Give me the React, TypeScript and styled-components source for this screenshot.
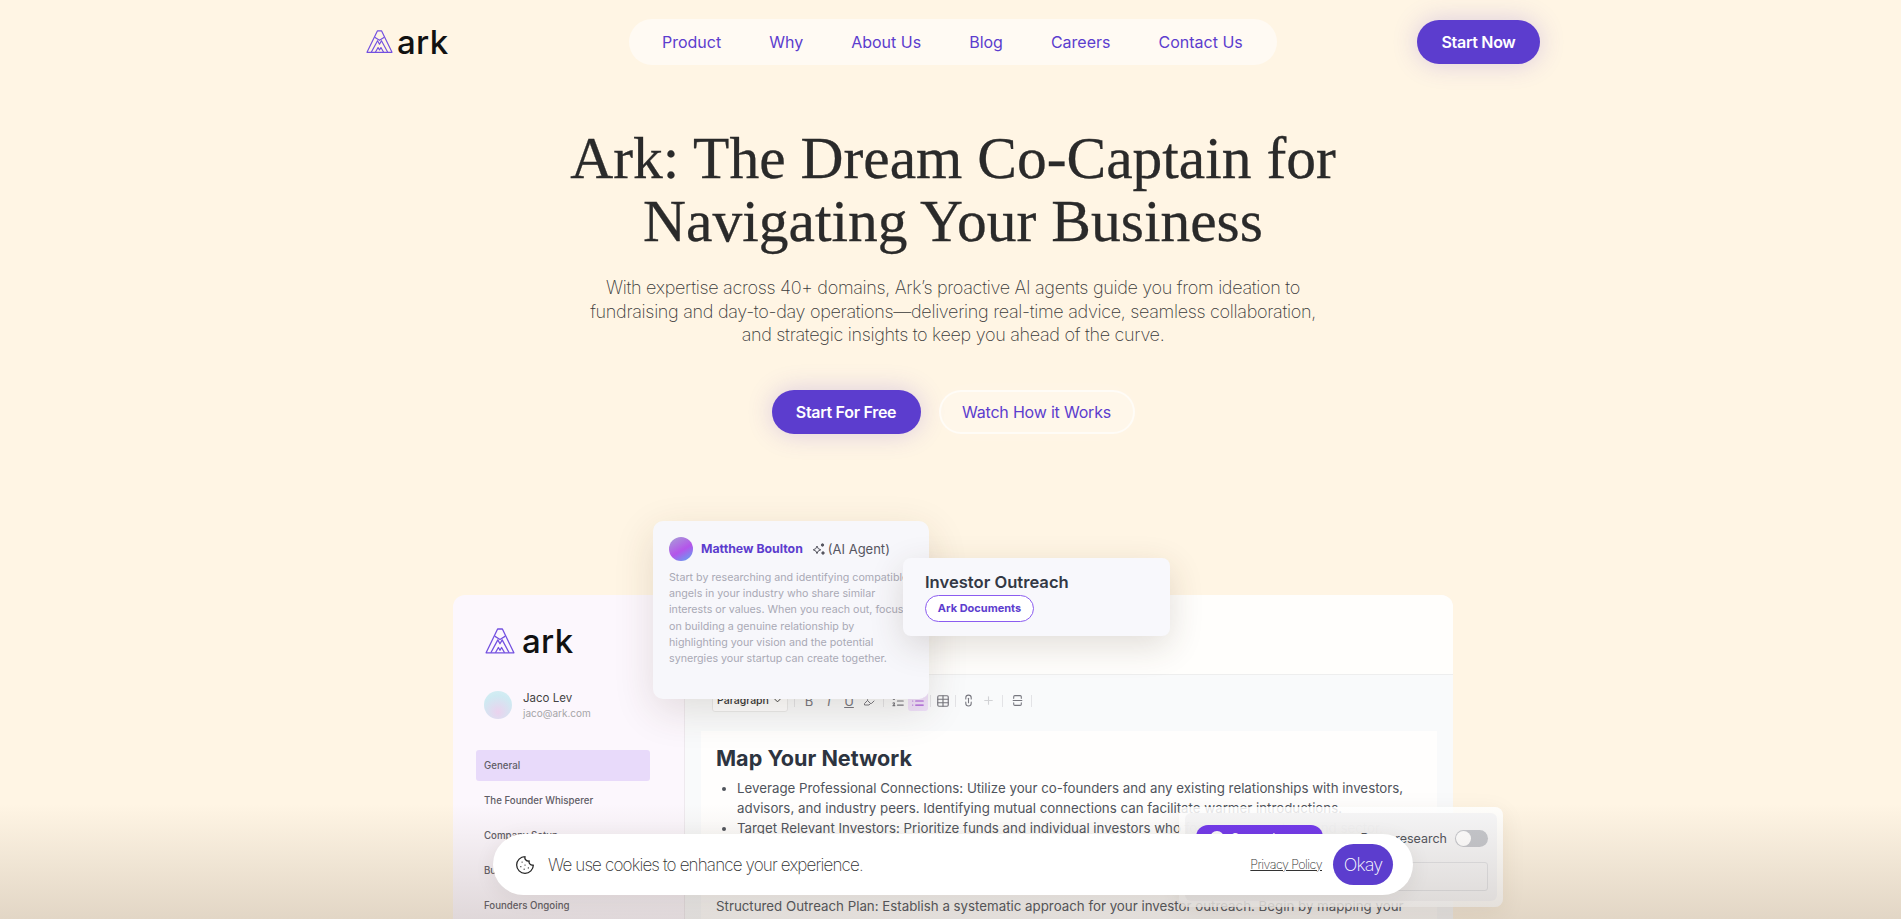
import React from "react";
import styled, { createGlobalStyle } from "styled-components";
import { ChevronDown, Cookie, Highlighter, Link2, List, ListOrdered, Plus, SquareSplitVertical, Table } from "lucide-react";

const GlobalStyle = createGlobalStyle`
	html, body {
		margin: 0;
		padding: 0;
		background: #FFF5E4;
		font-family: "Inter", "Liberation Sans", sans-serif;
	}
	* {
		box-sizing: border-box;
	}
`;

const PURPLE = "#5C3DCE";

const Page = styled.div`
	position: relative;
	width: 1901px;
	height: 919px;
	overflow: hidden;
	padding-left: 5px;
	background: #FFF5E4;
`;

const Header = styled.header`
	display: flex;
	align-items: center;
	width: 1174px;
	margin: 0 auto;
	padding-top: 19px;
`;

const HeaderBrand = styled.div`
	width: 263px;
`;

const LogoRow = styled.div<{ $gap: number }>`
	display: flex;
	align-items: center;
	gap: ${(p) => p.$gap}px;
	color: #111;
	font-family: "Inter", sans-serif;
	font-size: 33px;
	font-weight: 500;
	line-height: 1;
	letter-spacing: 0.01em;
`;

const Nav = styled.nav`
	display: flex;
	align-items: center;
	gap: 48px;
	width: 648px;
	height: 46px;
	padding-left: 33px;
	border-radius: 24px;
	background: #FFFAF3;
`;

const NavLink = styled.a`
	color: ${PURPLE};
	font-size: 16px;
	line-height: 20px;
`;

const PillButton = styled.button<{ $wide?: boolean }>`
	height: 44px;
	padding: 0;
	width: ${(p) => (p.$wide ? "149px" : "123px")};
	border: 0;
	border-radius: 22px;
	background: ${PURPLE};
	box-shadow: 0 0 26px rgba(92, 61, 206, 0.22);
	color: #fff;
	font-family: inherit;
	font-size: 16px;
	font-weight: 600;
	letter-spacing: -0.3px;
`;

const HeaderCta = styled(PillButton)`
	margin-left: 140px;
`;

const Hero = styled.section`
	display: flex;
	flex-direction: column;
	align-items: center;
	padding-top: 62px;
`;

const Title = styled.h1`
	margin: 0;
	color: #2A2A2A;
	font-family: "Liberation Serif", serif;
	font-size: 59.5px;
	font-weight: 400;
	line-height: 63px;
	text-align: center;
	-webkit-text-stroke: 0.3px #2A2A2A;
`;

const Lead = styled.p`
	margin: 23px 0 0;
	color: #3A3A3A;
	font-size: 18px;
	font-weight: 200;
	line-height: 23.6px;
	letter-spacing: -0.31px;
	text-align: center;
	white-space: nowrap;
`;

const HeroActions = styled.div`
	display: flex;
	gap: 18px;
	margin-top: 43px;
`;

const GhostButton = styled.button`
	width: 196px;
	height: 44px;
	padding: 0;
	border: 2px solid rgba(255, 255, 255, 0.6);
	border-radius: 22px;
	background: rgba(255, 255, 255, 0.22);
	box-shadow: 0 0 30px rgba(255, 255, 255, 0.12);
	color: ${PURPLE};
	font-family: inherit;
	font-size: 16px;
	letter-spacing: -0.2px;
`;

const Stage = styled.div`
	position: relative;
	width: 1000px;
	margin: 161px auto 0;
`;

const Frame = styled.div`
	display: grid;
	grid-template-columns: 232px minmax(0, 1fr);
	height: 400px;
	border-radius: 12px 12px 0 0;
	overflow: hidden;
`;

const Sidebar = styled.aside`
	padding: 30px 34px 0 23px;
	border-right: 1px solid #EEE9EE;
	background: #FCF7FD;
`;

const SidebarBrand = styled.div`
	padding-left: 9px;
`;

const Profile = styled.div`
	display: flex;
	align-items: center;
	gap: 11px;
	margin: 33px 0 30px 8px;
`;

const ProfileAvatar = styled.div`
	width: 28px;
	height: 28px;
	border-radius: 50%;
	background: radial-gradient(circle at 50% 75%, #EBD2EE 0%, #CFEAF2 65%, #D6F0F4 100%);
`;

const ProfileName = styled.div`
	color: #444;
	font-size: 11.5px;
	line-height: 15px;
`;

const ProfileMail = styled.div`
	color: #A5A5A8;
	font-size: 10px;
	line-height: 14px;
`;

const SideItem = styled.div<{ $active?: boolean }>`
	display: flex;
	align-items: center;
	height: 31px;
	margin-bottom: 4px;
	padding-left: 8px;
	border-radius: 3px;
	background: ${(p) => (p.$active ? "#E8DAFA" : "transparent")};
	color: #5F5D66;
	font-size: 9.7px;
	font-weight: 500;
`;

const Main = styled.main`
	display: flex;
	flex-direction: column;
	min-width: 0;
	background: #F9FAFB;
`;

const TitleBar = styled.div`
	flex: none;
	height: 80px;
	border-bottom: 1px solid #EEEEEE;
	background: #FFFEFC;
`;

const Toolbar = styled.div`
	flex: none;
	display: flex;
	align-items: center;
	height: 22px;
	margin: 15px 0 19px 27px;
	color: #77777F;
`;

const StyleSelect = styled.div`
	display: flex;
	align-items: center;
	justify-content: space-between;
	width: 76px;
	height: 22px;
	margin-right: 2px;
	padding: 0 4px;
	border: 1px solid #EAEAEA;
	border-radius: 3px;
	background: #fff;
	color: #333;
	font-size: 10.5px;
	font-weight: 500;
`;

const ToolSep = styled.span<{ $tight?: boolean }>`
	width: 1px;
	height: 12px;
	margin: ${(p) => (p.$tight ? "0 2px" : "0 4px")};
	background: #E3E3E6;
`;

const ToolGlyph = styled.span<{ $active?: boolean; $faint?: boolean; $italic?: boolean; $under?: boolean; $turned?: boolean }>`
	display: flex;
	align-items: center;
	justify-content: center;
	width: 20px;
	height: 20px;
	border-radius: 3px;
	background: ${(p) => (p.$active ? "#EFE0FA" : "transparent")};
	color: ${(p) => (p.$active ? "#A855D8" : "inherit")};
	opacity: ${(p) => (p.$faint ? 0.3 : 1)};
	font-size: 13px;
	font-style: ${(p) => (p.$italic ? "italic" : "normal")};
	text-decoration: ${(p) => (p.$under ? "underline" : "none")};
	svg {
		transform: ${(p) => (p.$turned ? "rotate(90deg)" : "none")};
	}
`;

const Sheet = styled.article`
	flex: 1;
	margin: 0 16px;
	padding: 12px 15px 0;
	background: #FFFEFD;
	color: #50545C;
	font-size: 13.3px;
	line-height: 20px;
`;

const SheetTitle = styled.h2`
	margin: 0 0 5px;
	color: #2D3440;
	font-size: 21.6px;
	font-weight: 700;
	line-height: 30px;
`;

const SheetList = styled.ul`
	margin: 0 0 58px;
	padding-left: 21px;
`;

const SheetText = styled.p`
	margin: 0;
	white-space: nowrap;
`;

const AgentCard = styled.div`
	position: absolute;
	left: 200px;
	top: -74px;
	width: 276px;
	height: 178px;
	padding: 16px 16px 0;
	border-radius: 10px;
	background: #F7F7FB;
	box-shadow: 0 12px 40px rgba(70, 50, 30, 0.14);
`;

const AgentHead = styled.div`
	display: flex;
	align-items: center;
	height: 24px;
`;

const AgentAvatar = styled.div`
	width: 24px;
	height: 24px;
	margin-right: 8px;
	border-radius: 50%;
	background: linear-gradient(150deg, #A89BD8 5%, #B455EA 55%, #58ABF2 100%);
`;

const AgentName = styled.span`
	margin-right: 9px;
	color: ${PURPLE};
	font-size: 12.3px;
	font-weight: 700;
`;

const AgentRole = styled.span`
	display: flex;
	align-items: center;
	gap: 2px;
	color: #55555F;
	font-size: 13px;
`;

const AgentText = styled.div`
	width: 250px;
	margin-top: 9px;
	color: #A9A9B5;
	font-size: 10.7px;
	line-height: 16.3px;
	white-space: nowrap;
`;

const InvestorCard = styled.div`
	position: absolute;
	left: 450px;
	top: -37px;
	width: 267px;
	height: 78px;
	padding: 13px 22px 0;
	border-radius: 8px;
	background: #F8F8FC;
	box-shadow: 0 10px 34px rgba(70, 50, 30, 0.16);
`;

const InvestorTitle = styled.div`
	color: #333845;
	font-size: 16.6px;
	font-weight: 600;
	line-height: 22px;
`;

const Tag = styled.div`
	display: inline-flex;
	align-items: center;
	justify-content: center;
	width: 109px;
	height: 27px;
	margin-top: 2px;
	border: 1px solid #8B5CF0;
	border-radius: 14px;
	background: #fff;
	color: ${PURPLE};
	font-size: 11px;
	font-weight: 700;
`;

const Composer = styled.div`
	position: absolute;
	left: 726px;
	top: 212px;
	width: 324px;
	height: 100px;
	padding: 6px;
	border-radius: 8px;
	background: rgba(255, 255, 255, 0.86);
	box-shadow: 0 6px 24px rgba(70, 50, 30, 0.08);
`;

const ComposerInner = styled.div`
	height: 88px;
	padding: 12px 9px 0 11px;
	border-radius: 6px;
	background: rgba(244, 244, 246, 0.85);
`;

const ComposerRow = styled.div`
	display: flex;
	align-items: flex-start;
	justify-content: space-between;
	height: 30px;
`;

const ComposerAction = styled.div`
	display: flex;
	align-items: flex-start;
	gap: 7px;
	width: 127px;
	height: 30px;
	padding: 6px 0 0 14px;
	border-radius: 12px;
	background: #7339EE;
	color: #fff;
	font-size: 13px;
	line-height: 14px;
`;

const ActionDot = styled.span`
	width: 14px;
	height: 14px;
	border-radius: 50%;
	background: #fff;
`;

const ResearchToggle = styled.div`
	display: flex;
	align-items: center;
	gap: 8px;
	margin-top: 5px;
	color: #50535B;
	font-size: 12.5px;
`;

const Switch = styled.span`
	position: relative;
	width: 33px;
	height: 17px;
	border-radius: 9px;
	background: #C5C7CC;
	&::after {
		content: "";
		position: absolute;
		left: 1px;
		top: 1px;
		width: 15px;
		height: 15px;
		border-radius: 50%;
		background: #fff;
	}
`;

const ComposerInput = styled.div`
	height: 29px;
	margin-top: 7px;
	border: 1px solid #E1E2E5;
	border-radius: 3px;
`;

const BottomFade = styled.div`
	position: absolute;
	left: 0;
	right: 0;
	bottom: 0;
	height: 115px;
	background: linear-gradient(to bottom, rgba(120, 100, 80, 0), rgba(110, 90, 75, 0.2));
	pointer-events: none;
`;

const CookieBar = styled.div`
	position: absolute;
	left: 493px;
	bottom: 24px;
	display: flex;
	align-items: center;
	width: 920px;
	height: 61px;
	padding: 0 20px 0 22px;
	border-radius: 31px;
	background: #fff;
	box-shadow: 0 4px 20px rgba(60, 50, 40, 0.08);
`;

const CookieText = styled.span`
	flex: 1;
	margin-left: 13px;
	color: #333;
	font-size: 17px;
	font-weight: 200;
	letter-spacing: -0.85px;
`;

const PrivacyLink = styled.a`
	margin-right: 11px;
	color: #333;
	font-size: 12.5px;
	font-weight: 200;
	letter-spacing: -0.55px;
	text-decoration: underline;
`;

const OkayButton = styled.button`
	width: 60px;
	height: 41px;
	padding: 0;
	border: 0;
	border-radius: 21px;
	background: ${PURPLE};
	color: #fff;
	font-family: inherit;
	font-size: 18px;
	font-weight: 200;
	letter-spacing: -0.8px;
`;

const LogoMark = ({ width }: { width: number }) => (
	<svg width={width} height={width * 0.86} viewBox="0 0 30 26" fill="none" stroke="#7350E0" strokeWidth="1.3" strokeLinejoin="round">
		<path d="M12.6 1h4.8L29 25H1Z" />
		<path d="M5.8 25l7-13 2.2 3.9 2.2-3.9 7 13" />
		<path d="M10.4 25l3-5.4 1.6 2.8 1.6-2.8 3 5.4" />
		<path d="M9.6 8.2l5.4 3.4 5.4-3.4" />
	</svg>
);

const Logo = ({ markWidth, gap }: { markWidth: number; gap: number }) => (
	<LogoRow $gap={gap}>
		<LogoMark width={markWidth} />
		<span>ark</span>
	</LogoRow>
);

const AgentIcon = () => (
	<svg width="14" height="14" viewBox="0 0 14 14" fill="#55555F" stroke="#55555F" strokeWidth="1">
		<path d="M5 4l1.2 2.6L8.8 7.8 6.2 9 5 11.6 3.8 9 1.2 7.8l2.6-1.2z" fill="none" />
		<circle cx="10.5" cy="3" r="1.2" />
		<circle cx="11" cy="11" r="1.2" />
	</svg>
);

const navLinks = ["Product", "Why", "About Us", "Blog", "Careers", "Contact Us"];
const sideItems = ["The Founder Whisperer", "Company Setup", "Business Planning", "Founders Ongoing"];
const agentLines = [
	"Start by researching and identifying compatible",
	"angels in your industry who share similar",
	"interests or values. When you reach out, focus",
	"on building a genuine relationship by",
	"highlighting your vision and the potential",
	"synergies your startup can create together.",
];

export default function App() {
	return (
		<Page>
			<GlobalStyle />
			<Header>
				<HeaderBrand>
					<Logo markWidth={27} gap={4} />
				</HeaderBrand>
				<Nav>
					{navLinks.map((link) => (
						<NavLink key={link}>{link}</NavLink>
					))}
				</Nav>
				<HeaderCta>Start Now</HeaderCta>
			</Header>

			<Hero>
				<Title>
					Ark: The Dream Co-Captain for
					<br />
					Navigating Your Business
				</Title>
				<Lead>
					With expertise across 40+ domains, Ark’s proactive AI agents guide you from ideation to
					<br />
					fundraising and day-to-day operations—delivering real-time advice, seamless collaboration,
					<br />
					and strategic insights to keep you ahead of the curve.
				</Lead>
				<HeroActions>
					<PillButton $wide>Start For Free</PillButton>
					<GhostButton>Watch How it Works</GhostButton>
				</HeroActions>
			</Hero>

			<Stage>
				<Frame>
					<Sidebar>
						<SidebarBrand>
							<Logo markWidth={30} gap={7} />
						</SidebarBrand>
						<Profile>
							<ProfileAvatar />
							<div>
								<ProfileName>Jaco Lev</ProfileName>
								<ProfileMail>jaco@ark.com</ProfileMail>
							</div>
						</Profile>
						<SideItem $active>General</SideItem>
						{sideItems.map((item) => (
							<SideItem key={item}>{item}</SideItem>
						))}
					</Sidebar>
					<Main>
						<TitleBar />
						<Toolbar>
							<StyleSelect>
								Paragraph
								<ChevronDown size={11} />
							</StyleSelect>
							<ToolSep />
							<ToolGlyph>B</ToolGlyph>
							<ToolGlyph $italic>I</ToolGlyph>
							<ToolGlyph $under>U</ToolGlyph>
							<ToolGlyph><Highlighter size={12} /></ToolGlyph>
							<ToolSep />
							<ToolGlyph><ListOrdered size={14} /></ToolGlyph>
							<ToolGlyph $active><List size={14} /></ToolGlyph>
							<ToolSep $tight />
							<ToolGlyph><Table size={14} /></ToolGlyph>
							<ToolSep $tight />
							<ToolGlyph $turned><Link2 size={13} /></ToolGlyph>
							<ToolGlyph $faint><Plus size={13} /></ToolGlyph>
							<ToolSep />
							<ToolGlyph><SquareSplitVertical size={13} /></ToolGlyph>
							<ToolSep />
						</Toolbar>
						<Sheet>
							<SheetTitle>Map Your Network</SheetTitle>
							<SheetList>
								<li>
									Leverage Professional Connections: Utilize your co-founders and any existing relationships with investors,
									advisors, and industry peers. Identifying mutual connections can facilitate warmer introductions.
								</li>
								<li>Target Relevant Investors: Prioritize funds and individual investors who focus on your stage and sector.</li>
							</SheetList>
							<SheetText>Structured Outreach Plan: Establish a systematic approach for your investor outreach. Begin by mapping your</SheetText>
						</Sheet>
					</Main>
				</Frame>

				<AgentCard>
					<AgentHead>
						<AgentAvatar />
						<AgentName>Matthew Boulton</AgentName>
						<AgentRole>
							<AgentIcon />
							(AI Agent)
						</AgentRole>
					</AgentHead>
					<AgentText>
						{agentLines.map((line) => (
							<div key={line}>{line}</div>
						))}
					</AgentText>
				</AgentCard>

				<InvestorCard>
					<InvestorTitle>Investor Outreach</InvestorTitle>
					<Tag>Ark Documents</Tag>
				</InvestorCard>

				<Composer>
					<ComposerInner>
						<ComposerRow>
							<ComposerAction>
								<ActionDot />
								Save changes
							</ComposerAction>
							<ResearchToggle>
								Deep research
								<Switch />
							</ResearchToggle>
						</ComposerRow>
						<ComposerInput />
					</ComposerInner>
				</Composer>
			</Stage>

			<BottomFade />

			<CookieBar>
				<Cookie size={20} strokeWidth={1.5} color="#222" />
				<CookieText>We use cookies to enhance your experience.</CookieText>
				<PrivacyLink>Privacy Policy</PrivacyLink>
				<OkayButton>Okay</OkayButton>
			</CookieBar>
		</Page>
	);
}
